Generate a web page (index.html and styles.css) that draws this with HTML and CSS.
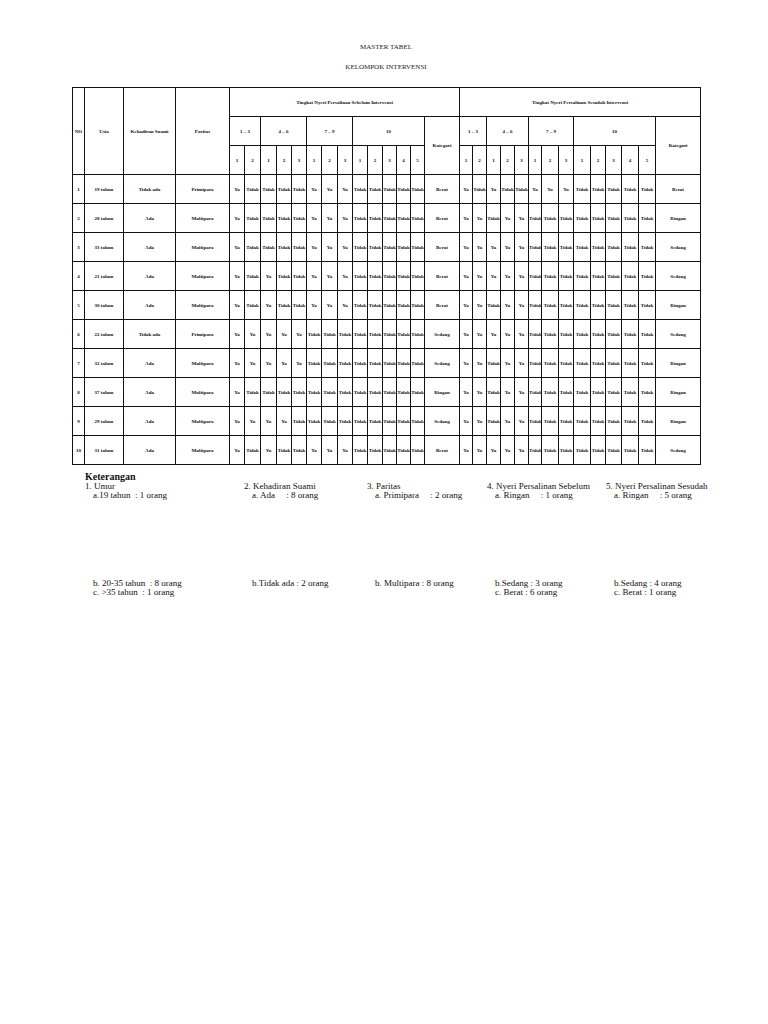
FILE: index.html
```html
<!DOCTYPE html>
<html>
<head>
<meta charset="utf-8">
<title>Master Tabel</title>
<link rel="stylesheet" href="styles.css">
</head>
<body>
<div class="page">
  <p class="title">MASTER TABEL</p>
  <p class="title second">KELOMPOK INTERVENSI</p>
  <table class="master">
    <colgroup>
      <col style="width:12px"><col style="width:39px"><col style="width:52px"><col style="width:54px">
      <col style="width:15px"><col style="width:16px"><col style="width:16px"><col style="width:15px"><col style="width:15px"><col style="width:15px"><col style="width:16px"><col style="width:15px"><col style="width:15px"><col style="width:15px"><col style="width:14px"><col style="width:14px"><col style="width:14px">
      <col style="width:35px">
      <col style="width:13px"><col style="width:14px"><col style="width:14px"><col style="width:14px"><col style="width:14px"><col style="width:13px"><col style="width:17px"><col style="width:15px"><col style="width:17px"><col style="width:15px"><col style="width:16px"><col style="width:17px"><col style="width:17px">
      <col style="width:45px">
    </colgroup>
    <tr>
      <td rowspan="3">NO</td>
      <td rowspan="3">Usia</td>
      <td rowspan="3">Kehadiran Suami</td>
      <td rowspan="3">Paritas</td>
      <td colspan="14">Tingkat Nyeri Persalinan Sebelum Intervensi</td>
      <td colspan="14">Tingkat Nyeri Persalinan Sesudah Intervensi</td>
    </tr>
    <tr>
      <td colspan="2">1 – 3</td><td colspan="3">4 – 6</td><td colspan="3">7 – 9</td><td colspan="5">10</td><td rowspan="2">Kategori</td>
      <td colspan="2">1 – 3</td><td colspan="3">4 – 6</td><td colspan="3">7 – 9</td><td colspan="5">10</td><td rowspan="2">Kategori</td>
    </tr>
    <tr>
      <td>1</td><td>2</td><td>1</td><td>2</td><td>3</td><td>1</td><td>2</td><td>3</td><td>1</td><td>2</td><td>3</td><td>4</td><td>5</td>
      <td>1</td><td>2</td><td>1</td><td>2</td><td>3</td><td>1</td><td>2</td><td>3</td><td>1</td><td>2</td><td>3</td><td>4</td><td>5</td>
    </tr>
    <tr>
      <td>1</td><td>19 tahun</td><td>Tidak ada</td><td>Primipara</td>
      <td>Ya</td><td>Tidak</td><td>Tidak</td><td>Tidak</td><td>Tidak</td><td>Ya</td><td>Ya</td><td>Ya</td><td>Tidak</td><td>Tidak</td><td>Tidak</td><td>Tidak</td><td>Tidak</td><td>Berat</td>
      <td>Ya</td><td>Tidak</td><td>Ya</td><td>Tidak</td><td>Tidak</td><td>Ya</td><td>Ya</td><td>Ya</td><td>Tidak</td><td>Tidak</td><td>Tidak</td><td>Tidak</td><td>Tidak</td><td>Berat</td>
    </tr>
    <tr>
      <td>2</td><td>28 tahun</td><td>Ada</td><td>Multipara</td>
      <td>Ya</td><td>Tidak</td><td>Tidak</td><td>Tidak</td><td>Tidak</td><td>Ya</td><td>Ya</td><td>Ya</td><td>Tidak</td><td>Tidak</td><td>Tidak</td><td>Tidak</td><td>Tidak</td><td>Berat</td>
      <td>Ya</td><td>Ya</td><td>Tidak</td><td>Ya</td><td>Ya</td><td>Tidak</td><td>Tidak</td><td>Tidak</td><td>Tidak</td><td>Tidak</td><td>Tidak</td><td>Tidak</td><td>Tidak</td><td>Ringan</td>
    </tr>
    <tr>
      <td>3</td><td>33 tahun</td><td>Ada</td><td>Multipara</td>
      <td>Ya</td><td>Tidak</td><td>Tidak</td><td>Tidak</td><td>Tidak</td><td>Ya</td><td>Ya</td><td>Ya</td><td>Tidak</td><td>Tidak</td><td>Tidak</td><td>Tidak</td><td>Tidak</td><td>Berat</td>
      <td>Ya</td><td>Ya</td><td>Ya</td><td>Ya</td><td>Ya</td><td>Tidak</td><td>Tidak</td><td>Tidak</td><td>Tidak</td><td>Tidak</td><td>Tidak</td><td>Tidak</td><td>Tidak</td><td>Sedang</td>
    </tr>
    <tr>
      <td>4</td><td>21 tahun</td><td>Ada</td><td>Multipara</td>
      <td>Ya</td><td>Tidak</td><td>Ya</td><td>Tidak</td><td>Tidak</td><td>Ya</td><td>Ya</td><td>Ya</td><td>Tidak</td><td>Tidak</td><td>Tidak</td><td>Tidak</td><td>Tidak</td><td>Berat</td>
      <td>Ya</td><td>Ya</td><td>Ya</td><td>Ya</td><td>Ya</td><td>Tidak</td><td>Tidak</td><td>Tidak</td><td>Tidak</td><td>Tidak</td><td>Tidak</td><td>Tidak</td><td>Tidak</td><td>Sedang</td>
    </tr>
    <tr>
      <td>5</td><td>30 tahun</td><td>Ada</td><td>Multipara</td>
      <td>Ya</td><td>Tidak</td><td>Ya</td><td>Tidak</td><td>Tidak</td><td>Ya</td><td>Ya</td><td>Ya</td><td>Tidak</td><td>Tidak</td><td>Tidak</td><td>Tidak</td><td>Tidak</td><td>Berat</td>
      <td>Ya</td><td>Ya</td><td>Tidak</td><td>Ya</td><td>Ya</td><td>Tidak</td><td>Tidak</td><td>Tidak</td><td>Tidak</td><td>Tidak</td><td>Tidak</td><td>Tidak</td><td>Tidak</td><td>Ringan</td>
    </tr>
    <tr>
      <td>6</td><td>22 tahun</td><td>Tidak ada</td><td>Primipara</td>
      <td>Ya</td><td>Ya</td><td>Ya</td><td>Ya</td><td>Ya</td><td>Tidak</td><td>Tidak</td><td>Tidak</td><td>Tidak</td><td>Tidak</td><td>Tidak</td><td>Tidak</td><td>Tidak</td><td>Sedang</td>
      <td>Ya</td><td>Ya</td><td>Ya</td><td>Ya</td><td>Ya</td><td>Tidak</td><td>Tidak</td><td>Tidak</td><td>Tidak</td><td>Tidak</td><td>Tidak</td><td>Tidak</td><td>Tidak</td><td>Sedang</td>
    </tr>
    <tr>
      <td>7</td><td>32 tahun</td><td>Ada</td><td>Multipara</td>
      <td>Ya</td><td>Ya</td><td>Ya</td><td>Ya</td><td>Ya</td><td>Tidak</td><td>Tidak</td><td>Tidak</td><td>Tidak</td><td>Tidak</td><td>Tidak</td><td>Tidak</td><td>Tidak</td><td>Sedang</td>
      <td>Ya</td><td>Ya</td><td>Tidak</td><td>Ya</td><td>Ya</td><td>Tidak</td><td>Tidak</td><td>Tidak</td><td>Tidak</td><td>Tidak</td><td>Tidak</td><td>Tidak</td><td>Tidak</td><td>Ringan</td>
    </tr>
    <tr>
      <td>8</td><td>37 tahun</td><td>Ada</td><td>Multipara</td>
      <td>Ya</td><td>Tidak</td><td>Tidak</td><td>Tidak</td><td>Tidak</td><td>Tidak</td><td>Tidak</td><td>Tidak</td><td>Tidak</td><td>Tidak</td><td>Tidak</td><td>Tidak</td><td>Tidak</td><td>Ringan</td>
      <td>Ya</td><td>Ya</td><td>Tidak</td><td>Ya</td><td>Ya</td><td>Tidak</td><td>Tidak</td><td>Tidak</td><td>Tidak</td><td>Tidak</td><td>Tidak</td><td>Tidak</td><td>Tidak</td><td>Ringan</td>
    </tr>
    <tr>
      <td>9</td><td>29 tahun</td><td>Ada</td><td>Multipara</td>
      <td>Ya</td><td>Ya</td><td>Ya</td><td>Ya</td><td>Tidak</td><td>Tidak</td><td>Tidak</td><td>Tidak</td><td>Tidak</td><td>Tidak</td><td>Tidak</td><td>Tidak</td><td>Tidak</td><td>Sedang</td>
      <td>Ya</td><td>Ya</td><td>Tidak</td><td>Ya</td><td>Ya</td><td>Tidak</td><td>Tidak</td><td>Tidak</td><td>Tidak</td><td>Tidak</td><td>Tidak</td><td>Tidak</td><td>Tidak</td><td>Ringan</td>
    </tr>
    <tr>
      <td>10</td><td>31 tahun</td><td>Ada</td><td>Multipara</td>
      <td>Ya</td><td>Tidak</td><td>Ya</td><td>Tidak</td><td>Tidak</td><td>Ya</td><td>Ya</td><td>Ya</td><td>Tidak</td><td>Tidak</td><td>Tidak</td><td>Tidak</td><td>Tidak</td><td>Berat</td>
      <td>Ya</td><td>Ya</td><td>Ya</td><td>Ya</td><td>Ya</td><td>Tidak</td><td>Tidak</td><td>Tidak</td><td>Tidak</td><td>Tidak</td><td>Tidak</td><td>Tidak</td><td>Tidak</td><td>Sedang</td>
    </tr>
  </table>

  <div class="ket">
    <div class="ket-title">Keterangan</div>
    <div class="ket-grid">
      <div class="ket-col">
        <div class="line">1. Umur</div>
        <div class="line sub">a.19 tahun  : 1 orang</div>
        <div class="line sub gap">b. 20-35 tahun  : 8 orang</div>
        <div class="line sub">c. &gt;35 tahun  : 1 orang</div>
      </div>
      <div class="ket-col">
        <div class="line">2. Kehadiran Suami</div>
        <div class="line sub">a. Ada     : 8 orang</div>
        <div class="line sub gap">b.Tidak ada : 2 orang</div>
      </div>
      <div class="ket-col">
        <div class="line">3. Paritas</div>
        <div class="line sub">a. Primipara     : 2 orang</div>
        <div class="line sub gap">b. Multipara : 8 orang</div>
      </div>
      <div class="ket-col">
        <div class="line">4. Nyeri Persalinan Sebelum</div>
        <div class="line sub">a. Ringan     : 1 orang</div>
        <div class="line sub gap">b.Sedang : 3 orang</div>
        <div class="line sub">c. Berat : 6 orang</div>
      </div>
      <div class="ket-col">
        <div class="line">5. Nyeri Persalinan Sesudah</div>
        <div class="line sub">a. Ringan     : 5 orang</div>
        <div class="line sub gap">b.Sedang : 4 orang</div>
        <div class="line sub">c. Berat : 1 orang</div>
      </div>
    </div>
  </div>
</div>
</body>
</html>
```
FILE: styles.css
```css
html, body {
  margin: 0;
  padding: 0;
  background: #fff;
}

body {
  font-family: "Liberation Serif", "Times New Roman", serif;
  color: #000;
}

.page {
  width: 628px;
  margin-left: 72px;
  padding-top: 42px;
}

.title {
  margin: 0;
  text-align: center;
  font-size: 7px;
  line-height: 10px;
  color: #222;
}

.title.second {
  margin-top: 10px;
}

.master {
  margin-top: 15px;
  width: 628px;
  border-collapse: collapse;
  table-layout: fixed;
}

.master tr {
  height: 29px;
}

.master td {
  border: 1px solid #111;
  padding: 0;
  font-size: 5px;
  font-weight: bold;
  text-align: center;
  vertical-align: middle;
  white-space: nowrap;
  overflow: visible;
  color: #111;
}

.ket {
  padding-left: 13px;
  margin-top: 7px;
  color: #111;
}

.ket-title {
  font-size: 10px;
  font-weight: bold;
  line-height: 10px;
}

.ket-grid {
  display: grid;
  grid-template-columns: 159px 123px 120px 119px auto;
}

.line {
  font-size: 9px;
  line-height: 9px;
  white-space: pre;
}

.line.sub {
  padding-left: 8px;
}

.line.gap {
  margin-top: 79px;
}
```
